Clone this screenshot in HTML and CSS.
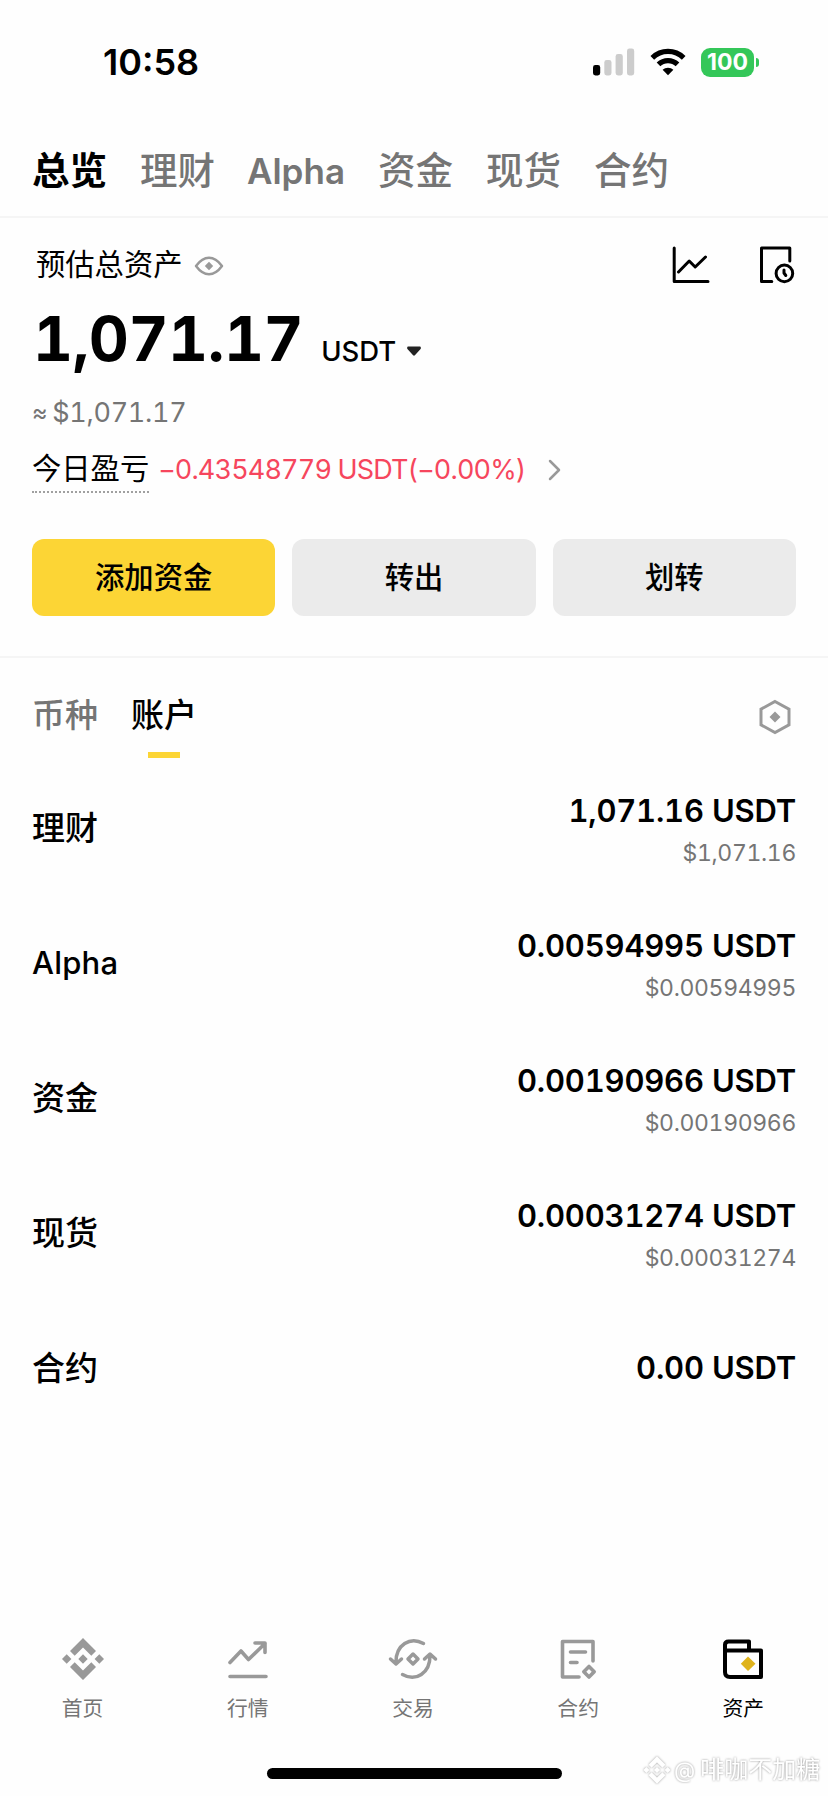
FILE: index.html
```html
<!DOCTYPE html>
<html lang="zh-CN">
<head>
<meta charset="utf-8">
<title>资产总览</title>
<link rel="stylesheet" href="styles.css">
</head>
<body>
<main class="app">
  <div class="status">
    <span class="clock">10:58</span>
    <div class="status-icons">
      <svg class="signal" width="42" height="28" viewBox="0 0 42 28"><rect x="0" y="17" width="7.2" height="10.500" rx="2.400" fill="#000"/><g fill="#ccc"><rect x="11.300" y="12" width="7.200" height="15.500" rx="2.400"/><rect x="22.600" y="6" width="7.200" height="21.500" rx="2.400"/><rect x="34" y="0.500" width="7.200" height="27" rx="2.400"/></g></svg>
      <svg class="wifi" width="36" height="28" viewBox="0 0 36 28"><g fill="none" stroke="#000" stroke-width="5.200"><path d="M2.300 9.800a22.400 22.400 0 0 1 31.400 0"/><path d="M8.500 16.400a13.600 13.600 0 0 1 19 0"/></g><path d="M18 27.200l-5.400-5.400a7.800 7.800 0 0 1 10.800 0z"/></svg>
      <div class="battery"><span class="battery-body">100</span><span class="battery-nub"></span></div>
    </div>
  </div>

  <nav class="top-tabs">
    <a class="on">总览</a><a>理财</a><a class="latin">Alpha</a><a>资金</a><a>现货</a><a>合约</a>
  </nav>

  <section class="summary">
    <div class="est-row">
      <span class="est-label">预估总资产</span>
      <svg class="eye" width="30" height="20" viewBox="0 0 30 20"><path d="M2 10Q8 1.800 15 1.800T28 10Q22 18.200 15 18.200T2 10z" fill="none" stroke="#999" stroke-width="2.500" stroke-linejoin="round"/><path d="M15 5.800l4.200 4.200-4.200 4.200-4.200-4.200z" fill="#999"/></svg>
      <div class="tools">
        <svg width="38" height="38" viewBox="0 0 38 38" fill="none" stroke="#000" stroke-width="3" stroke-linecap="round" stroke-linejoin="round"><path d="M2.200 2v33.500H36M6.500 26L17.200 15l6 6L33.500 11"/></svg>
        <svg width="38" height="38" viewBox="0 0 38 38" fill="none" stroke="#000" stroke-width="3" stroke-linecap="round" stroke-linejoin="round"><path d="M12.800 35.500H2.500V2h28.300v13"/><circle cx="25.400" cy="27.400" r="8.300"/><path d="M25 24v3l1.800 2.500"/></svg>
      </div>
    </div>
    <div class="total-row">
      <span class="total">1,071.17</span><span class="unit">USDT</span>
      <svg class="caret" width="14" height="10" viewBox="0 0 14 10"><path d="M1.200 0.500h11.600q1.200 0 1 1.200v1L7.900 9.300q-.9.800-1.800 0L.2 2.700v-1Q0 .5 1.200.5z" fill="#222"/></svg>
    </div>
    <div class="approx"><span class="tilde">≈</span><span class="usd">$1,071.17</span></div>
    <div class="pnl"><span class="pnl-label">今日盈亏</span><span class="pnl-value">−0.43548779 USDT(−0.00%)</span>
      <svg class="chev" width="13" height="22" viewBox="0 0 13 22"><path d="M2 2l9 9-9 9" fill="none" stroke="#999" stroke-width="2.500" stroke-linecap="round" stroke-linejoin="round"/></svg>
    </div>
    <div class="actions"><button class="primary">添加资金</button><button>转出</button><button>划转</button></div>
  </section>

  <section class="accounts">
    <div class="sub-tabs">
      <a>币种</a><a class="on">账户</a>
      <svg class="hex" width="34" height="36" viewBox="0 0 34 36"><path d="M17 2.500L31 10.200v15.600L17 33.500 3 25.800V10.200z" fill="none" stroke="#999" stroke-width="3"/><path d="M17 12.500l5.500 5.500-5.500 5.500-5.500-5.500z" fill="#999"/></svg>
    </div>
    <ul class="list">
      <li><span class="name">理财</span><div class="vals"><span class="amt">1,071.16 USDT</span><span class="fiat">$1,071.16</span></div></li>
      <li><span class="name latin">Alpha</span><div class="vals"><span class="amt">0.00594995 USDT</span><span class="fiat">$0.00594995</span></div></li>
      <li><span class="name">资金</span><div class="vals"><span class="amt">0.00190966 USDT</span><span class="fiat">$0.00190966</span></div></li>
      <li><span class="name">现货</span><div class="vals"><span class="amt">0.00031274 USDT</span><span class="fiat">$0.00031274</span></div></li>
      <li><span class="name">合约</span><div class="vals"><span class="amt">0.00 USDT</span></div></li>
    </ul>
  </section>

  <footer class="dock">
    <nav class="bottom-nav">
      <a><svg width="50" height="50" viewBox="0 0 50 50" fill="#999"><path d="M25 4l13 13-4.700 4.700L25 13.400l-8.300 8.300L12 17zM25 46l13-13-4.700-4.700-8.300 8.300-8.300-8.300L12 33zM25 20.300l4.700 4.700-4.700 4.700-4.700-4.700zM8.700 20.300l4.700 4.700-4.700 4.700L4 25zM41.300 20.300L46 25l-4.700 4.700-4.700-4.700z"/></svg><span>首页</span></a>
      <a><svg width="50" height="50" viewBox="0 0 50 50" fill="none" stroke="#999" stroke-width="3.600" stroke-linecap="round" stroke-linejoin="round"><path d="M7 28.500L18 17l7.500 8.500L42 9.500M32 9h10v9.500M7 42.500h36"/></svg><span>行情</span></a>
      <a><svg width="50" height="50" viewBox="0 0 50 50" fill="none" stroke="#999" stroke-width="3.500" stroke-linecap="round" stroke-linejoin="round"><path d="M35.500 9.500C22 2 8 11 8 28M2.500 25L8 30l5.500-5M14.500 40.500C28 48 42 39 42 22M36.500 25l5.500-5 5.500 5"/><path d="M25 20l5 5-5 5-5-5z"/></svg><span>交易</span></a>
      <a><svg width="50" height="50" viewBox="0 0 50 50" fill="none" stroke="#999" stroke-width="3.600" stroke-linecap="round" stroke-linejoin="round"><path d="M26 43H9.500V7.500H40V27M17.500 18h15M17.500 28.500h6.500"/><path d="M36 32.500l5.200 5.200L36 43l-5.200-5.300z"/></svg><span>合约</span></a>
      <a class="on"><svg width="50" height="50" viewBox="0 0 50 50" fill="none" stroke="#000" stroke-width="4" stroke-linejoin="round"><path d="M7 17.500V11q0-3.500 3.500-3.500H31v9M7 16.500h36V43H12q-5 0-5-5z"/><path d="M30 22.500l7.500 7.200-7.500 7.300-7.200-7.300z" fill="#dfb31c" stroke="none"/></svg><span>资产</span></a>
    </nav>
    <div class="home-bar"></div>
  </footer>
  <div class="mark">
    <svg width="30" height="30" viewBox="2 2 46 46"><path d="M25 4l13 13-4.700 4.700L25 13.400l-8.300 8.300L12 17zM25 46l13-13-4.700-4.700-8.300 8.300-8.300-8.300L12 33zM25 20.300l4.700 4.700-4.700 4.700-4.700-4.700zM8.700 20.300l4.700 4.700-4.700 4.700L4 25zM41.300 20.300L46 25l-4.700 4.700-4.700-4.700z"/></svg>
    <span class="at">@</span><span>啡咖不加糖</span>
  </div>
</main>
</body>
</html>
```
FILE: styles.css
```css
* { box-sizing: border-box; }
body { margin: 0; background: #fefefe; color: #000; font-family: Inter, "Noto Sans CJK SC", sans-serif; font-variant-numeric: tabular-nums; }
svg { display: block; flex: none; }
.app { position: relative; width: 828px; height: 1796px; overflow: hidden; display: flex; flex-direction: column; white-space: nowrap; }

.status { height: 124px; padding: 0 69px 0 103px; display: flex; align-items: center; justify-content: space-between; }
.clock { font: 600 36px/40px Inter, sans-serif; }
.status-icons { display: flex; align-items: center; }
.wifi { margin-left: 15px; }
.battery { margin-left: 15px; display: flex; align-items: center; gap: 2px; }
.battery-body { width: 53px; height: 29px; border-radius: 9px; background: #34c759; color: #fff; font: 700 23px/29px Inter, sans-serif; text-align: center; }
.battery-nub { width: 3px; height: 9px; border-radius: 0 4px 4px 0; background: #34c759; }

.top-tabs { height: 94px; padding: 1px 0 0 32px; display: flex; align-items: center; gap: 33px; border-bottom: 2px solid #f5f5f5; font-size: 37.500px; line-height: 56px; font-weight: 500; color: #757575; }
.top-tabs .on { color: #000; font-weight: 700; }
.top-tabs .latin { font-size: 35px; font-weight: 600; margin-left: -1px; padding-top: 1px; }

.summary { height: 440px; padding: 27px 32px 0; border-bottom: 2px solid #f5f5f5; display: flex; flex-direction: column; }
.est-row { height: 40px; display: flex; align-items: center; padding-left: 4px; }
.est-label { font-size: 29.300px; line-height: 40px; }
.eye { margin-left: 12px; margin-top: 2px; }
.tools { margin: -1px -1px 0 auto; display: flex; gap: 49px; }
.total-row { display: flex; height: 90px; align-items: baseline; padding: 9px 0 0 1px; }
.total { font-size: 62px; line-height: 90px; font-weight: 700; letter-spacing: -0.450px; }
.unit { font-size: 27.500px; font-weight: 500; margin-left: 18px; }
.caret { margin-left: 11px; align-self: flex-start; margin-top: 52px; }
.approx { height: 56px; margin-top: 10px; display: flex; align-items: center; gap: 5px; color: #757575; font-size: 27px; line-height: 40px; letter-spacing: -0.300px; }
.tilde { font-size: 24px; }
.pnl { height: 52px; margin-top: 6px; display: flex; align-items: flex-start; }
.pnl-label { font-size: 29.300px; line-height: 44px; height: 46px; border-bottom: 2px dotted #a0a0a0; }
.pnl-value { margin-left: 9px; font-size: 27px; line-height: 46px; color: #f6465d; letter-spacing: -0.860px; }
.chev { margin: 12px 0 0 22px; }
.actions { display: grid; grid-template-columns: repeat(3, 1fr); gap: 17px; margin-top: 40px; }
.actions button { height: 77px; border: 0; border-radius: 12px; background: #ebebeb; color: #000; font: 500 29.300px/72px "Noto Sans CJK SC", sans-serif; padding: 0 0 5px; }
.actions .primary { background: #fcd535; }

.accounts { padding: 0 32px; }
.sub-tabs { height: 102px; display: flex; padding-top: 31px; gap: 33px; font-size: 33px; line-height: 52px; font-weight: 500; color: #757575; }
.sub-tabs .on { color: #000; display: flex; flex-direction: column; align-items: center; }
.sub-tabs .on::after { content: ""; width: 32px; height: 6px; margin-top: 11px; background: #fcd535; }
.hex { margin: 10px 4px 0 auto; }
.list { list-style: none; margin: 0; padding: 0; }
.list li { height: 135px; display: flex; align-items: center; justify-content: space-between; }
.name { font-size: 33px; font-weight: 500; line-height: 48px; }
.name.latin { font-size: 31px; font-weight: 500; letter-spacing: 0.200px; }
.vals { display: flex; flex-direction: column; align-items: flex-end; padding-top: 8px; }
.list li:last-child .vals { padding: 0; }
.amt { font-size: 31px; font-weight: 600; line-height: 42px; letter-spacing: -0.200px; }
.fiat { font-size: 23px; line-height: 42px; color: #757575; letter-spacing: -0.350px; }

.dock { margin-top: auto; height: 170px; display: flex; flex-direction: column; align-items: center; }
.bottom-nav { width: 100%; height: 142px; display: grid; grid-template-columns: repeat(5, 165.200px); align-items: start; padding-top: 8px; }
.bottom-nav a { display: flex; flex-direction: column; align-items: center; color: #757575; }
.bottom-nav span { font-size: 20.800px; line-height: 30px; margin-top: 10px; font-weight: 400; }
.bottom-nav .on { color: #000; }
.home-bar { width: 295px; height: 11px; border-radius: 6px; background: #000; }
.mark { position: absolute; left: 642px; top: 1754px; display: flex; align-items: center; height: 32px; color: #fff; font-size: 24px; line-height: 32px; filter: drop-shadow(0 0 1px #999); }
.mark svg { fill: #fff; }
.at { margin: 0 5px 0 2px; font-size: 22px; }
```
